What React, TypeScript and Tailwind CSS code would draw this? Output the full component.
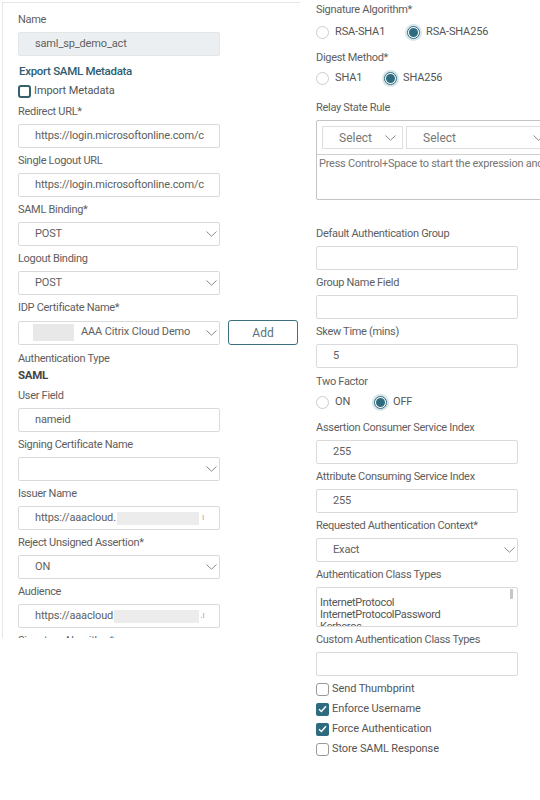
import React from "react";

const font = "font-['Roboto',sans-serif]";

function Chevron() {
  return (
    <svg width="11" height="6" viewBox="0 0 11 6" className="shrink-0">
      <polyline points="0.5,0.5 5.5,5.2 10.5,0.5" fill="none" stroke="#8a8a8a" strokeWidth="1" />
    </svg>
  );
}

function Label({ children, className = "" }: { children: React.ReactNode; className?: string }) {
  return (
    <div className={`h-[16px] leading-[16px] text-[11px] tracking-[-0.3px] text-[#5e5e5e] whitespace-nowrap ${className}`}>
      {children}
    </div>
  );
}

function Box({
  children,
  select = false,
  disabled = false,
  className = "",
}: {
  children?: React.ReactNode;
  select?: boolean;
  disabled?: boolean;
  className?: string;
}) {
  return (
    <div
      className={`h-[24px] w-[202px] shrink-0 rounded-[2px] border flex items-center pl-[16px] pr-[2px] text-[11px] tracking-[-0.15px] text-[#606060] whitespace-nowrap overflow-hidden ${
        disabled ? "bg-[#eceff1] border-[#e3e5e7]" : "bg-white border-[#dadada]"
      } ${className}`}
    >
      <div className="flex-1 flex items-center overflow-hidden">{children}</div>
      {select && <Chevron />}
    </div>
  );
}

function Field({
  label,
  children,
  mt = "mt-[5px]",
}: {
  label: string;
  children: React.ReactNode;
  mt?: string;
}) {
  return (
    <div className={mt}>
      <Label>{label}</Label>
      <div className="mt-[4px]">{children}</div>
    </div>
  );
}

function Radio({ checked, label, w }: { checked?: boolean; label: string; w?: string }) {
  return (
    <div className={`flex items-center h-[16px] ${w ?? ""}`}>
      {checked ? (
        <div className="w-[13px] h-[13px] rounded-full border border-[#2f6b7f] shadow-[0_0_0_2px_#d6e5ea] bg-white flex items-center justify-center shrink-0">
          <div className="w-[9px] h-[9px] rounded-full bg-[#2f6b7f]" />
        </div>
      ) : (
        <div className="w-[13px] h-[13px] rounded-full border border-[#cdcdcd] bg-white shrink-0" />
      )}
      <span className="ml-[6px] text-[11px] tracking-[-0.15px] text-[#555] whitespace-nowrap">{label}</span>
    </div>
  );
}

function Check({ checked, label }: { checked?: boolean; label: string }) {
  return (
    <div className="flex items-center h-[20px]">
      {checked ? (
        <div className="w-[13px] h-[13px] rounded-[2px] bg-[#2f6b80] flex items-center justify-center shrink-0">
          <svg width="9" height="8" viewBox="0 0 9 8">
            <polyline points="1,4.2 3.4,6.5 8,1.2" fill="none" stroke="#fff" strokeWidth="1.4" />
          </svg>
        </div>
      ) : (
        <div className="w-[13px] h-[13px] rounded-[3px] border border-[#9a9a9a] bg-white shrink-0" />
      )}
      <span className="ml-[3px] text-[11px] tracking-[-0.1px] text-[#555] whitespace-nowrap">{label}</span>
    </div>
  );
}

export default function App() {
  return (
    <div className={`${font} w-[540px] h-[800px] bg-white flex overflow-hidden`}>
      {/* Left panel */}
      <div className="ml-[2px] mt-[2px] w-[298px] h-[636px] shrink-0 border-l border-t border-[#e6e6e6] overflow-hidden pl-[15px] pt-[4px]">
        <Field label="Name">
          <Box disabled>saml_sp_demo_act</Box>
        </Field>
        <div className="mt-[7px] h-[16px] leading-[16px] pl-[1px] text-[11.5px] tracking-[-0.3px] font-medium text-[#2d5d70]">
          Export SAML Metadata
        </div>
        <div className="mt-[4px] h-[16px] flex items-center">
          <div className="w-[13px] h-[13px] rounded-[3px] border-[2px] border-[#35606e] shrink-0" />
          <span className="ml-[3px] text-[11px] tracking-[-0.1px] text-[#555]">Import Metadata</span>
        </div>
        <Field label="Redirect URL*">
          <Box>https://login.microsoftonline.com/c</Box>
        </Field>
        <Field label="Single Logout URL">
          <Box>https://login.microsoftonline.com/c</Box>
        </Field>
        <Field label="SAML Binding*">
          <Box select>POST</Box>
        </Field>
        <Field label="Logout Binding">
          <Box select>POST</Box>
        </Field>
        <Field label="IDP Certificate Name*">
          <div className="flex items-center">
            <Box select className="!pl-[14px]">
              <div className="w-[41px] h-[17px] bg-[#e8e8e8] shrink-0" />
              <span className="ml-[7px]">AAA Citrix Cloud Demo</span>
            </Box>
            <div className="ml-[8px] w-[70px] h-[25px] rounded-[3px] border border-[#3b6f80] flex items-center justify-center text-[12px] text-[#58707a]">
              Add
            </div>
          </div>
        </Field>
        <Label className="mt-[6px]">Authentication Type</Label>
        <div className="h-[16px] leading-[16px] text-[11.5px] font-bold tracking-[-0.3px] text-[#444]">SAML</div>
        <Field label="User Field">
          <Box>nameid</Box>
        </Field>
        <Field label="Signing Certificate Name">
          <Box select />
        </Field>
        <Field label="Issuer Name">
          <Box>
            <span>https://aaacloud.</span>
            <div className="ml-[1px] w-[82px] h-[13px] bg-[#ececec] shrink-0" />
            <span className="ml-[3px] text-[#aaa] text-[9px]">ı</span>
          </Box>
        </Field>
        <Field label="Reject Unsigned Assertion*">
          <Box select>ON</Box>
        </Field>
        <Field label="Audience">
          <Box>
            <span>https://aaacloud</span>
            <div className="ml-[1px] w-[85px] h-[13px] bg-[#ececec] shrink-0" />
            <span className="ml-[1px] text-[#aaa] text-[9px]">.ı</span>
          </Box>
        </Field>
        <Label className="mt-[5px]">Signature Algorithm*</Label>
      </div>

      {/* Right panel */}
      <div className="w-[240px] h-[800px] shrink-0 pl-[16px] pt-[2px] overflow-hidden">
        <Label>Signature Algorithm*</Label>
        <div className="mt-[6px] flex">
          <Radio label="RSA-SHA1" w="w-[91px]" />
          <Radio checked label="RSA-SHA256" />
        </div>
        <Label className="mt-[10px]">Digest Method*</Label>
        <div className="mt-[4px] flex">
          <Radio label="SHA1" w="w-[68px]" />
          <Radio checked label="SHA256" />
        </div>
        <Label className="mt-[14px]">Relay State Rule</Label>
        <div className="mt-[4px] w-[260px] h-[80px] border border-[#c4c4c4] rounded-[2px]">
          <div className="px-[5px] pt-[5px] pb-[5px] border-b border-[#cfcfcf] flex">
            <div className="w-[81px] h-[23px] border border-[#dedede] flex items-center pl-[16px] pr-[6px] text-[12px] text-[#777]">
              <span className="flex-1">Select</span>
              <Chevron />
            </div>
            <div className="ml-[3px] w-[144px] h-[23px] border border-[#dedede] flex items-center pl-[16px] pr-[5px] text-[12px] text-[#777]">
              <span className="flex-1">Select</span>
              <Chevron />
            </div>
          </div>
          <div className="pt-[1px] pl-[2px] h-[16px] leading-[16px] text-[11px] tracking-[-0.25px] text-[#757575] whitespace-nowrap">
            Press Control+Space to start the expression and then type
          </div>
        </div>
        <Field label="Default Authentication Group" mt="mt-[26px]">
          <Box />
        </Field>
        <Field label="Group Name Field">
          <Box />
        </Field>
        <Field label="Skew Time (mins)">
          <Box>5</Box>
        </Field>
        <Label className="mt-[6px]">Two Factor</Label>
        <div className="mt-[4px] flex">
          <Radio label="ON" w="w-[58px]" />
          <Radio checked label="OFF" />
        </div>
        <Field label="Assertion Consumer Service Index" mt="mt-[10px]">
          <Box>255</Box>
        </Field>
        <Field label="Attribute Consuming Service Index">
          <Box>255</Box>
        </Field>
        <Field label="Requested Authentication Context*">
          <Box select>Exact</Box>
        </Field>
        <Field label="Authentication Class Types">
          <div className="w-[202px] h-[40px] border border-[#dadada] rounded-[2px] flex overflow-hidden">
            <div className="flex-1 pl-[3px] pt-[9px] text-[11px] leading-[12px] tracking-[-0.3px] text-[#555]">
              <div>InternetProtocol</div>
              <div>InternetProtocolPassword</div>
              <div>Kerberos</div>
            </div>
            <div className="pr-[4px] pt-[1px]">
              <div className="w-[3px] h-[10px] bg-[#c6c6c6] rounded-[1px]" />
            </div>
          </div>
        </Field>
        <Field label="Custom Authentication Class Types">
          <Box />
        </Field>
        <div className="mt-[3px]">
          <Check label="Send Thumbprint" />
          <Check checked label="Enforce Username" />
          <Check checked label="Force Authentication" />
          <Check label="Store SAML Response" />
        </div>
      </div>
    </div>
  );
}
